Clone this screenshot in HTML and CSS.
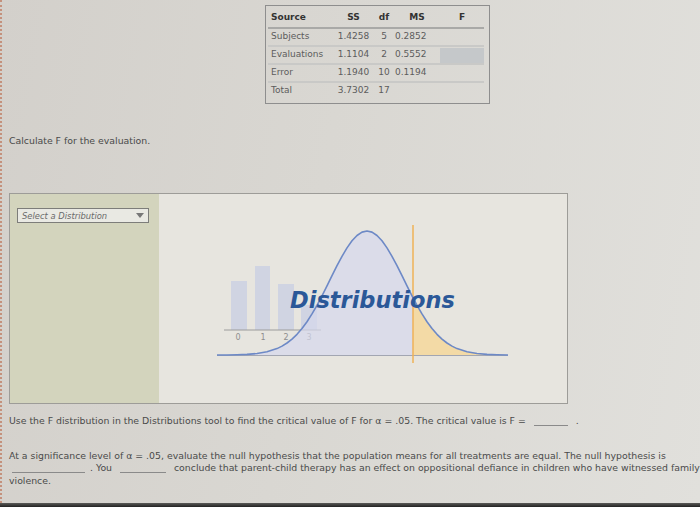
FILE: index.html
```html
<!DOCTYPE html>
<html lang="en">
<head>
<meta charset="utf-8">
<title>ANOVA question</title>
<link rel="stylesheet" href="styles.css">
</head>
<body>
<div class="page">
  <div class="anova">
    <div class="anova-row anova-head">
      <span class="c-src">Source</span><span>SS</span><span>df</span><span>MS</span><span>F</span>
    </div>
    <div class="anova-row">
      <span class="c-src">Subjects</span><span>1.4258</span><span>5</span><span class="c-ms">0.2852</span><span></span>
    </div>
    <div class="anova-row">
      <span class="c-src">Evaluations</span><span>1.1104</span><span>2</span><span class="c-ms">0.5552</span><span class="f-input"></span>
    </div>
    <div class="anova-row">
      <span class="c-src">Error</span><span>1.1940</span><span>10</span><span class="c-ms">0.1194</span><span></span>
    </div>
    <div class="anova-row anova-last">
      <span class="c-src">Total</span><span>3.7302</span><span>17</span><span class="c-ms"></span><span></span>
    </div>
  </div>

  <p class="prompt">Calculate F for the evaluation.</p>

  <div class="tool">
    <div class="tool-side">
      <div class="select-box">
        <span class="select-text">Select a Distribution</span>
        <span class="select-arrow"></span>
      </div>
    </div>
    <div class="tool-stage">
      <svg class="dist-art" width="408" height="209" viewBox="159 194 408 209" xmlns="http://www.w3.org/2000/svg">
        <g fill="#d0d4e2">
          <rect x="231" y="281" width="16" height="49"/>
          <rect x="255" y="266" width="15" height="64"/>
          <rect x="278" y="284" width="16" height="46"/>
          <rect x="301" y="305" width="16" height="25"/>
        </g>
        <line x1="224" y1="330" x2="321" y2="330" stroke="#9c9c9c" stroke-width="1"/>
        <g class="axis-labels" fill="#8e8e8e" text-anchor="middle">
          <text x="238" y="340">0</text>
          <text x="263" y="340">1</text>
          <text x="286" y="340">2</text>
          <text x="309" y="340">3</text>
        </g>
        <polygon fill="#d6d9ec" fill-opacity="0.7" points="217,355 227,355 237,354.8 247,354.4 257,353.5 267,351.8 277,348.6 282,346.1 287,343 292,339.1 297,334.3 302,328.5 307,321.7 312,313.9 317,305.3 322,295.8 327,285.8 332,275.7 337,265.7 342,256.3 347,247.9 352,240.8 357,235.5 362,232.1 367,231 372,232.1 377,235.5 382,240.8 387,247.9 392,256.3 397,265.7 402,275.7 407,285.8 412,295.8 413,297.7 413,355"/>
        <polygon fill="#f3daa6" points="413,297.7 417,305.3 422,313.9 427,321.7 432,328.5 437,334.3 442,339.1 447,343 452,346.1 457,348.6 467,351.8 477,353.5 487,354.4 497,354.8 508,355 413,355"/>
        <line x1="217" y1="355.5" x2="508" y2="355.5" stroke="#a2a6b2" stroke-width="1"/>
        <line x1="413" y1="225" x2="413" y2="363" stroke="#efb257" stroke-width="1.5"/>
        <polyline fill="none" stroke="#6d89c6" stroke-width="1.6" stroke-linejoin="round" points="217,355 227,355 237,354.8 247,354.4 257,353.5 267,351.8 277,348.6 282,346.1 287,343 292,339.1 297,334.3 302,328.5 307,321.7 312,313.9 317,305.3 322,295.8 327,285.8 332,275.7 337,265.7 342,256.3 347,247.9 352,240.8 357,235.5 362,232.1 367,231 372,232.1 377,235.5 382,240.8 387,247.9 392,256.3 397,265.7 402,275.7 407,285.8 412,295.8 413,297.7 417,305.3 422,313.9 427,321.7 432,328.5 437,334.3 442,339.1 447,343 452,346.1 457,348.6 467,351.8 477,353.5 487,354.4 497,354.8 508,355"/>
        <text class="dist-title" x="290" y="308">Distributions</text>
      </svg>
    </div>
  </div>

  <p class="question q-critical">Use the F distribution in the Distributions tool to find the critical value of F for α = .05. The critical value is F = <span class="blank blank-crit"></span> <span class="dot">.</span></p>

  <p class="question q-decision">At a significance level of α = .05, evaluate the null hypothesis that the population means for all treatments are equal. The null hypothesis is <span class="blank blank-long"></span> . You <span class="blank blank-mid"></span> conclude that parent-child therapy has an effect on oppositional defiance in children who have witnessed family violence.</p>

  <div class="screen-edge"></div>
</div>
</body>
</html>
```

FILE: styles.css
```css
html, body {
  margin: 0;
  padding: 0;
  height: 100%;
  overflow: hidden;
}

body {
  background: linear-gradient(100deg, #d3d0cb 0%, #d9d7d2 45%, #e1e0dc 100%);
  font-family: "DejaVu Sans", Verdana, sans-serif;
  color: #4a4a4a;
}

.page {
  box-sizing: border-box;
  height: 507px;
  display: flex;
  flex-direction: column;
  align-items: flex-start;
  border-left: 2px dotted #c4917c;
  padding-left: 7px;
}

/* ANOVA table */
.anova {
  margin: 5px 0 0 256px;
  width: 216px;
  padding: 1px 5px 4px 2px;
  border: 1px solid #8e8e8e;
  font-size: 9px;
  color: #5c5c5c;
}

.anova-row {
  display: grid;
  grid-template-columns: 65px 41px 20px 46px 44px;
  height: 16px;
  line-height: 14px;
  border-bottom: 2px solid #c9c9c7;
  text-align: center;
}

.anova-row > span {
  display: block;
}

.anova-head {
  height: 20px;
  line-height: 20px;
  font-weight: bold;
  color: #333;
  border-bottom-color: #a9a9a7;
}

.anova-last {
  border-bottom: none;
}

.anova .c-src {
  text-align: left;
  padding-left: 3px;
}

.anova-row .c-ms {
  text-align: left;
  padding-left: 1px;
}

.anova-head .c-ms {
  text-align: center;
}

.f-input {
  background: #c5c8ca;
  height: 15px;
  margin-top: 1px;
}

/* prose */
.prompt {
  margin: 31px 0 0;
  font-size: 9.35px;
  line-height: 12px;
}

.question {
  margin: 0;
  font-size: 9.35px;
  line-height: 12.5px;
}

.q-critical {
  margin-top: 11px;
}

.q-decision {
  margin-top: 22px;
  width: 716px;
}

.blank {
  display: inline-block;
  border-bottom: 1px solid #8a8a8a;
  height: 1px;
  vertical-align: -2px;
}

.blank-crit {
  width: 34px;
  margin-left: 5px;
}

.dot {
  margin-left: 5px;
}

.blank-long {
  width: 73px;
  margin: 0 2px 0 3px;
}

.blank-mid {
  width: 46px;
  margin: 0 5px 0 5px;
}

/* distributions tool */
.tool {
  margin-top: 46px;
  width: 557px;
  height: 209px;
  display: flex;
  border: 1px solid #9d9c98;
}

.tool-side {
  width: 149px;
  background: #d3d4bd;
  padding: 14px 0 0 7px;
  box-sizing: border-box;
}

.select-box {
  box-sizing: border-box;
  width: 132px;
  height: 15px;
  border: 1px solid #7d7d7a;
  background: #e9e9e3;
  display: flex;
  align-items: center;
  justify-content: space-between;
  padding: 0 4px 0 4px;
}

.select-text {
  font-size: 8.4px;
  font-style: italic;
  color: #6a6a6a;
}

.select-arrow {
  width: 0;
  height: 0;
  border-left: 4.5px solid transparent;
  border-right: 4.5px solid transparent;
  border-top: 5px solid #777;
}

.tool-stage {
  flex: 1;
  background: #e7e5df;
}

.dist-art {
  display: block;
}

.axis-labels {
  font-family: "DejaVu Sans", sans-serif;
  font-size: 8px;
}

.dist-title {
  font-family: "DejaVu Sans", Verdana, sans-serif;
  font-size: 22.5px;
  font-weight: bold;
  font-style: italic;
  fill: #2b5898;
}

.screen-edge {
  margin-top: auto;
  margin-left: -9px;
  width: 720px;
  height: 4px;
  background: linear-gradient(#5a5a58, #222);
}
```
